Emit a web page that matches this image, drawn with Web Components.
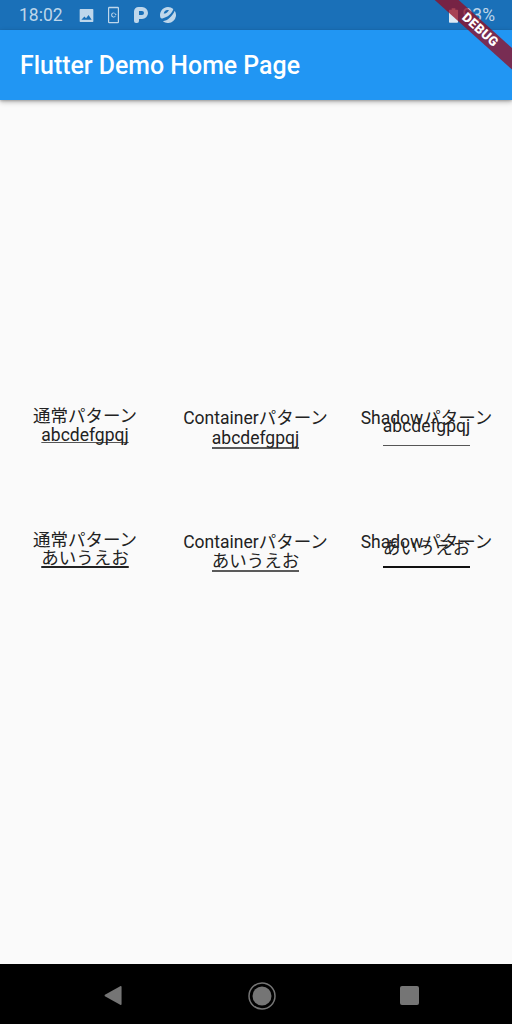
<!DOCTYPE html>
<html>
<head>
<meta charset="utf-8">
<style>
  html, body { margin: 0; height: 100%; }
  body { font-family: Roboto, "Noto Sans CJK JP", sans-serif; background: #fafafa; }
  demo-screen { height: 1024px; }
</style>
</head>
<body>
<demo-screen>
  <status-bar slot="status"></status-bar>
  <app-bar slot="bar" title="Flutter Demo Home Page"></app-bar>
  <demo-row style="margin-top:306px">
    <plain-cell text="abcdefgpqj" thin></plain-cell>
    <box-cell text="abcdefgpqj" thin></box-cell>
    <shadow-cell text="abcdefgpqj" thin></shadow-cell>
  </demo-row>
  <demo-row>
    <plain-cell text="あいうえお"></plain-cell>
    <box-cell text="あいうえお"></box-cell>
    <shadow-cell text="あいうえお"></shadow-cell>
  </demo-row>
  <nav-bar slot="nav"></nav-bar>
  <debug-banner slot="over"></debug-banner>
</demo-screen>

<script>
// page frame: bars on top, content in the middle, nav at the bottom
class DemoScreen extends HTMLElement {
  constructor() {
    super();
    this.attachShadow({ mode: 'open' });
    this.shadowRoot.innerHTML = `
      <style>
        :host { display: flex; flex-direction: column; position: relative; overflow: hidden; }
        main { flex: 1; display: flex; flex-direction: column; }
      </style>
      <slot name="status"></slot>
      <slot name="bar"></slot>
      <main><slot></slot></main>
      <slot name="nav"></slot>
      <slot name="over"></slot>
    `;
  }
}

class StatusBar extends HTMLElement {
  constructor() {
    super();
    this.attachShadow({ mode: 'open' });
    this.shadowRoot.innerHTML = `
      <style>
        :host {
          display: flex; align-items: center; height: 30px; box-sizing: border-box;
          padding-left: 19px; background: #1a70b8; color: rgba(255,255,255,.72);
          font: 400 17.5px Roboto, sans-serif;
        }
        svg { display: block; fill: rgba(255,255,255,.72); }
        .time { width: 60px; }
        .icons { display: flex; align-items: center; flex: 1; }
        .batt { display: flex; align-items: center; gap: 5px; margin-right: 17px; }
      </style>
      <span class="time">18:02</span>
      <div class="icons">
        <svg width="15" height="15" viewBox="0 0 16 16"><path fill-rule="evenodd" d="M1.500 1h13a.8.8 0 0 1 .8.8v12.400a.8.8 0 0 1-.8.800h-13a.8.8 0 0 1-.8-.800V1.800a.8.8 0 0 1 .8-.8zM2.500 12.500h11L10.200 7.500 7.500 11 5.800 9z"/></svg>
        <svg style="margin-left:14px" width="11" height="18" viewBox="0 0 12 18"><path fill-rule="evenodd" d="M1.500 0h9A1.500 1.500 0 0 1 12 1.500v15a1.500 1.500 0 0 1-1.500 1.500h-9A1.500 1.500 0 0 1 0 16.500v-15A1.500 1.500 0 0 1 1.500 0zM1.300 1.500v15h9.400v-15z"/><path d="M6 6.300a2.700 2.700 0 0 1 2.500 1.700l.8-.2-.5 1.600-1.500-.9.600-.2A1.900 1.900 0 0 0 6 7.200a1.900 1.900 0 0 0 0 3.700 1.900 1.900 0 0 0 1.700-1h.9A2.700 2.700 0 1 1 6 6.300z"/></svg>
        <svg style="margin-left:15px" width="14" height="16" viewBox="0 0 14 16"><path fill-rule="evenodd" d="M0 14V4.500A4.500 4.500 0 0 1 4.500 0H8a6 6 0 0 1 0 12H5v2a2 2 0 0 1-2 2H2a2 2 0 0 1-2-2zM5 4v4H8a2 2 0 0 0 0-4z"/></svg>
        <svg style="margin-left:12px" width="16" height="16" viewBox="0 0 18 18"><path fill-rule="evenodd" d="M9 0a9 9 0 0 1 6 2.300C13.500 7.400 8.500 11.600 2.800 12.900 1.800 13.100 1 13 .6 12.200A9 9 0 0 1 9 0zM8.500 3.500c-2.200 0-4.100 1.800-4.300 3.900 1.500.2 3-.5 4-1.500s1.500-1.600 2-2.200a4.500 4.500 0 0 0-1.700-.2z"/><path d="M16.600 4.200A9 9 0 0 1 3.200 15.900c5.300-.4 10.800-5.600 13.400-11.700z"/></svg>
      </div>
      <div class="batt">
        <svg width="9" height="15" viewBox="0 0 10 16" style="fill:rgba(255,255,255,.85)"><path d="M3 0h4v1.500h2.200a.8.800 0 0 1 .8.800v13a.8.8 0 0 1-.8.700H.8a.8.800 0 0 1-.8-.700v-13a.8.800 0 0 1 .8-.800H3z"/></svg>
        <span>93%</span>
      </div>
    `;
  }
}

class AppBar extends HTMLElement {
  constructor() {
    super();
    this.attachShadow({ mode: 'open' });
    const title = this.getAttribute('title') || '';
    this.shadowRoot.innerHTML = `
      <style>
        :host {
          display: flex; align-items: center; height: 70px; box-sizing: border-box;
          padding-left: 20px; background: #2196f3; color: #fff;
          font: 500 24.9px Roboto, sans-serif; position: relative;
          box-shadow: 0 2px 5px rgba(0,0,0,.28), 0 1px 2px rgba(0,0,0,.18);
        }
      </style>
      <span>${title}</span>
    `;
  }
}

class DemoRow extends HTMLElement {
  constructor() {
    super();
    this.attachShadow({ mode: 'open' });
    this.shadowRoot.innerHTML = `
      <style>
        :host { display: grid; grid-template-columns: 170px 171px 171px; align-items: start; height: 124px; }
      </style>
      <slot></slot>
    `;
  }
}

const cellStyle = `
  :host {
    display: flex; flex-direction: column; align-items: center;
    font: 400 17.5px/20px Roboto, "Noto Sans CJK JP", sans-serif; color: #222;
  }
  .label { white-space: nowrap; }
`;

// text with a normal underline
class PlainCell extends HTMLElement {
  constructor() {
    super();
    this.attachShadow({ mode: 'open' });
    const text = this.getAttribute('text');
    const thin = this.hasAttribute('thin');
    this.shadowRoot.innerHTML = `
      <style>${cellStyle}
        .sub {
          margin-top: ${thin ? -1 : -2}px; text-decoration: underline;
          text-decoration-thickness: ${thin ? 1 : 1.5}px;
          text-underline-offset: ${thin ? 1 : 2}px; text-decoration-skip-ink: none;
          text-decoration-color: ${thin ? '#555' : '#222'};
        }
      </style>
      <span class="label">通常パターン</span>
      <span class="sub">${text}</span>
    `;
  }
}

// underline drawn as the bottom border of a container
class BoxCell extends HTMLElement {
  constructor() {
    super();
    this.attachShadow({ mode: 'open' });
    const text = this.getAttribute('text');
    const thin = this.hasAttribute('thin');
    this.shadowRoot.innerHTML = `
      <style>${cellStyle}
        :host { padding-top: 2px; }
        .sub { border-bottom: 2px solid #5a5a5a; margin-top: ${thin ? 0 : -1}px; height: 19px; }
      </style>
      <span class="label">Containerパターン</span>
      <span class="sub">${text}</span>
    `;
  }
}

// text lifted off its underline, so it runs into the label
class ShadowCell extends HTMLElement {
  constructor() {
    super();
    this.attachShadow({ mode: 'open' });
    const text = this.getAttribute('text');
    const thin = this.hasAttribute('thin');
    this.shadowRoot.innerHTML = `
      <style>${cellStyle}
        :host { padding-top: 2px; }
        .sub {
          display: block; border-bottom: ${thin ? '1px solid #555' : '2px solid #111'};
          height: ${thin ? 17 : 14}px;
        }
        .sub span { display: block; margin-top: ${thin ? -12 : -14}px; }
      </style>
      <span class="label">Shadowパターン</span>
      <span class="sub"><span>${text}</span></span>
    `;
  }
}

class NavBar extends HTMLElement {
  constructor() {
    super();
    this.attachShadow({ mode: 'open' });
    this.shadowRoot.innerHTML = `
      <style>
        :host {
          display: grid; grid-template-columns: 232px 60px 220px; height: 60px; box-sizing: border-box;
          padding-top: 3px; background: #000; align-items: center;
        }
        svg { display: block; fill: #757575; }
        .a { justify-self: end; margin-right: 110px; }
        .b { justify-self: center; }
        .c { margin-left: 108px; }
      </style>
      <svg class="a" width="18" height="21" viewBox="0 0 20 22"><path d="M18.500.5 Q19.500.3 19.500 1.500 V20.500 Q19.500 21.700 18.500 21.500 L1 11.800 Q.2 11 1 10.200z"/></svg>
      <svg class="b" width="28" height="28" viewBox="0 0 28 28"><circle cx="14" cy="14" r="13" fill="none" stroke="#757575" stroke-width="1.500"/><circle cx="14" cy="14" r="9.500"/></svg>
      <svg class="c" width="19" height="19" viewBox="0 0 19 19"><rect width="19" height="19" rx="2"/></svg>
    `;
  }
}

// the red corner ribbon
class DebugBanner extends HTMLElement {
  constructor() {
    super();
    this.attachShadow({ mode: 'open' });
    this.shadowRoot.innerHTML = `
      <style>
        :host { position: absolute; top: 0; right: 0; width: 90px; height: 90px; overflow: hidden; pointer-events: none; }
        div {
          position: absolute; left: -2px; top: 22px; width: 120px; height: 16px;
          transform: rotate(42deg);
          background: rgba(150,10,30,.75); color: #fff; text-align: center;
          font: 900 13px/16px Roboto, sans-serif; letter-spacing: .4px;
        }
      </style>
      <div>DEBUG</div>
    `;
  }
}

customElements.define('demo-screen', DemoScreen);
customElements.define('status-bar', StatusBar);
customElements.define('app-bar', AppBar);
customElements.define('demo-row', DemoRow);
customElements.define('plain-cell', PlainCell);
customElements.define('box-cell', BoxCell);
customElements.define('shadow-cell', ShadowCell);
customElements.define('nav-bar', NavBar);
customElements.define('debug-banner', DebugBanner);
</script>
</body>
</html>
